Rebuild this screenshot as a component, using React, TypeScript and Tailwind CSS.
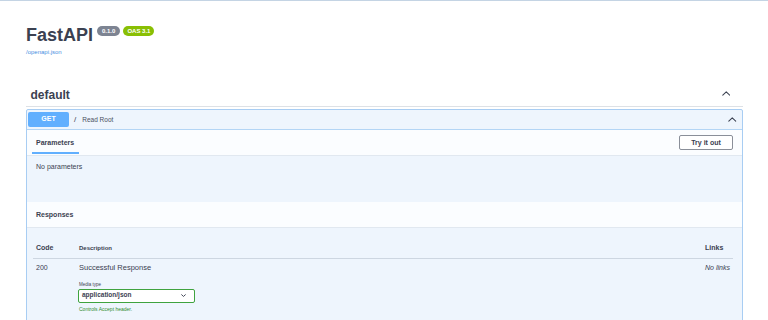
const Chevron = ({ className }: { className?: string }) => (
  <svg viewBox="0 0 16 9" className={className} fill="none" stroke="currentColor" strokeWidth={2} strokeLinecap="round" strokeLinejoin="round">
    <path d="M1.5 7.5 L8 1.5 L14.5 7.5" />
  </svg>
);

const ChevronDown = ({ className }: { className?: string }) => (
  <svg viewBox="0 0 16 9" className={className} fill="none" stroke="currentColor" strokeWidth={3} strokeLinecap="round" strokeLinejoin="round">
    <path d="M2 2 L8 7.5 L14 2" />
  </svg>
);

export default function App() {
  return (
    <div className="min-h-screen border-t border-[#c4d4e4] bg-white font-['Liberation_Sans',Arial,sans-serif] text-[#3b4151]">
      <div className="pl-[26px] pr-[25px]">
        {/* info */}
        <div className="pt-[25px]">
          <div className="flex items-start gap-[3px]">
            <h2 className="text-[18px] font-bold leading-[18px]">FastAPI</h2>
            <span className="ml-[1px] h-[10px] rounded-full bg-[#7d8492] px-[5px] text-[6px] font-bold leading-[10px] text-white">
              0.1.0
            </span>
            <span className="h-[10px] rounded-full bg-[#89bf04] px-[4px] text-[6px] font-bold leading-[10px] text-white">
              OAS 3.1
            </span>
          </div>
          <a className="mt-[4px] block text-[6px] leading-[8px] text-[#4990e2]">/openapi.json</a>
        </div>

        {/* tag */}
        <div className="mt-[28px] flex h-[23px] items-center justify-between border-b border-[#dde1e6]">
          <h3 className="pl-[4.5px] text-[12px] font-bold leading-[16px]">default</h3>
          <Chevron className="mb-[4px] mr-[13px] h-[5px] w-[8.5px]" />
        </div>

        {/* operation */}
        <div className="mt-[2px] overflow-hidden rounded-[2px] border border-[#a8cdf3] bg-[#eef5fd]">
          <div className="flex h-[20px] items-center border-b border-[#b3d5f5] pl-[1px] pr-[5.5px]">
            <span className="flex h-[15px] w-[41px] items-center justify-center rounded-[2px] bg-[#61affe] text-[7px] font-bold text-white">
              GET
            </span>
            <span className="ml-[5px] text-[8px] leading-[10px]">/</span>
            <span className="ml-[6px] text-[6.5px] leading-[8px] text-[#4a505e]">Read Root</span>
            <Chevron className="ml-auto h-[5px] w-[8.5px]" />
          </div>

          <div className="flex h-[26px] items-center justify-between border-b border-[#e1e8f0] bg-[#fbfdff] pl-[9px] pr-[9px]">
            <h4 className="relative text-[7px] font-bold leading-[8px]">
              Parameters
              <span className="absolute -left-[4px] -right-[5px] top-[13.5px] h-[2px] bg-[#61affe]" />
            </h4>
            <button className="flex h-[15px] w-[54px] items-center justify-center rounded-[2px] border border-[#8a8f99] bg-white text-[7px] font-bold leading-none">
              Try it out
            </button>
          </div>
          <div className="h-[46px] px-[9px] pt-[7px]">
            <p className="text-[7px] leading-[8px]">No parameters</p>
          </div>

          <div className="flex h-[26px] items-center border-b border-[#e1e8f0] bg-[#fbfdff] pl-[9px]">
            <h4 className="text-[7px] font-bold leading-[8px]">Responses</h4>
          </div>

          <div className="pl-[6px] pr-[9px] pb-[20px]">
            <div className="flex items-baseline border-b border-[#cdd6e1] pb-[6.5px] pt-[15.5px]">
              <div className="w-[46px] pl-[3px] text-[7px] font-bold leading-[8px]">Code</div>
              <div className="flex-1 text-[6px] font-bold leading-[8px]">Description</div>
              <div className="w-[31px] pl-[3px] text-[7px] font-bold leading-[8px]">Links</div>
            </div>
            <div className="flex items-start pt-[5px]">
              <div className="w-[46px] pl-[3px] text-[7px] leading-[8px]">200</div>
              <div className="flex-1">
                <p className="text-[7.5px] leading-[8px]">Successful Response</p>
                <p className="mt-[9.5px] text-[4.5px] leading-[6px]">Media type</p>
                <div className="-ml-[1px] mt-[1px] flex h-[14px] w-[117px] items-center justify-between rounded-[2px] border-[1.5px] border-[#3fa33f] bg-white pl-[3px] pr-[8px]">
                  <span className="text-[6.5px] font-bold leading-none">application/json</span>
                  <ChevronDown className="h-[3px] w-[5px]" />
                </div>
                <p className="mt-[3.5px] text-[5px] leading-[6px] text-[#2e8b2e]">Controls Accept header.</p>
              </div>
              <div className="w-[31px] pl-[3px] text-[7px] italic leading-[8px]">No links</div>
            </div>
          </div>
        </div>
      </div>
    </div>
  );
}
